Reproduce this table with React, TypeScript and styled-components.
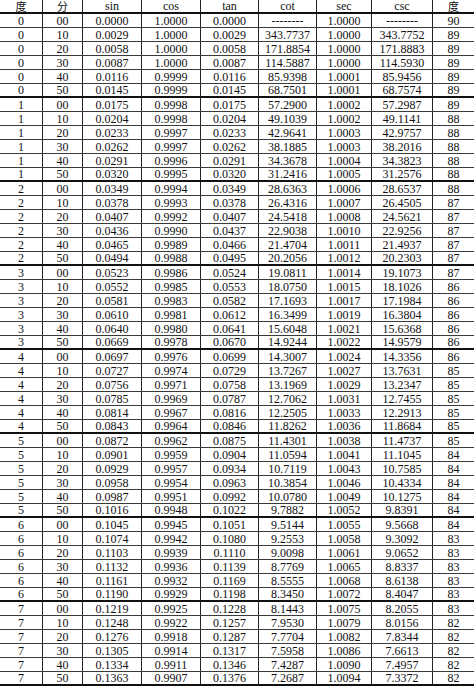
import React from 'react';
import styled, { createGlobalStyle } from 'styled-components';

const GlobalStyle = createGlobalStyle`
  html, body {
    margin: 0;
    padding: 0;
    background: #ffffff;
  }
`;

const COLUMNS = '43px 40px 59px 59px 58px 58px 55px 61px 41px';

const Sheet = styled.div`
  width: 474px;
  font-family: 'Liberation Serif', 'Noto Sans CJK SC', serif;
  font-size: 12px;
  color: #111111;
  background: #ffffff;
`;

const Row = styled.div<{ $thick?: boolean }>`
  display: grid;
  grid-template-columns: ${COLUMNS};
  box-sizing: border-box;
  height: 14px;
  border-bottom: ${(p) => (p.$thick ? '2px solid #111111' : '1px solid #3a3a3a')};
`;

const Cell = styled.div<{ $cjk?: boolean }>`
  box-sizing: border-box;
  display: flex;
  align-items: center;
  justify-content: center;
  border-right: 1px solid #222222;
  line-height: ${(p) => (p.$cjk ? '11px' : '12px')};
  white-space: nowrap;
  font-family: ${(p) =>
    p.$cjk ? "'Noto Sans CJK SC', 'Liberation Serif', sans-serif" : "'Liberation Serif', serif"};
  font-size: ${(p) => (p.$cjk ? '11px' : '12px')};

  &:last-child {
    border-right: none;
  }
`;

const HEADERS = ['度', '分', 'sin', 'cos', 'tan', 'cot', 'sec', 'csc', '度'];

function fmt(v: number) {
  return (Math.round(v * 10000) / 10000).toFixed(4);
}

function buildRows() {
  const rows: string[][] = [];
  for (let d = 0; d < 8; d++) {
    for (let m = 0; m < 60; m += 10) {
      const rad = ((d + m / 60) * Math.PI) / 180;
      const s = Math.sin(rad);
      const c = Math.cos(rad);
      const zero = d === 0 && m === 0;
      rows.push([
        String(d),
        m === 0 ? '00' : String(m),
        // the printed table lists sin 4°00' as 0.0697
        d === 4 && m === 0 ? '0.0697' : fmt(s),
        fmt(c),
        fmt(s / c),
        zero ? '--------' : fmt(c / s),
        fmt(1 / c),
        zero ? '--------' : fmt(1 / s),
        String(m === 0 ? 90 - d : 89 - d),
      ]);
    }
  }
  return rows;
}

const rows = buildRows();

export default function App() {
  return (
    <>
      <GlobalStyle />
      <Sheet>
        <Row $thick>
          {HEADERS.map((h, i) => (
            <Cell key={i} $cjk={h === '度' || h === '分'}>
              {h}
            </Cell>
          ))}
        </Row>
        {rows.map((r, i) => (
          <Row key={i} $thick={i % 6 === 5}>
            {r.map((v, j) => (
              <Cell key={j}>{v}</Cell>
            ))}
          </Row>
        ))}
      </Sheet>
    </>
  );
}
